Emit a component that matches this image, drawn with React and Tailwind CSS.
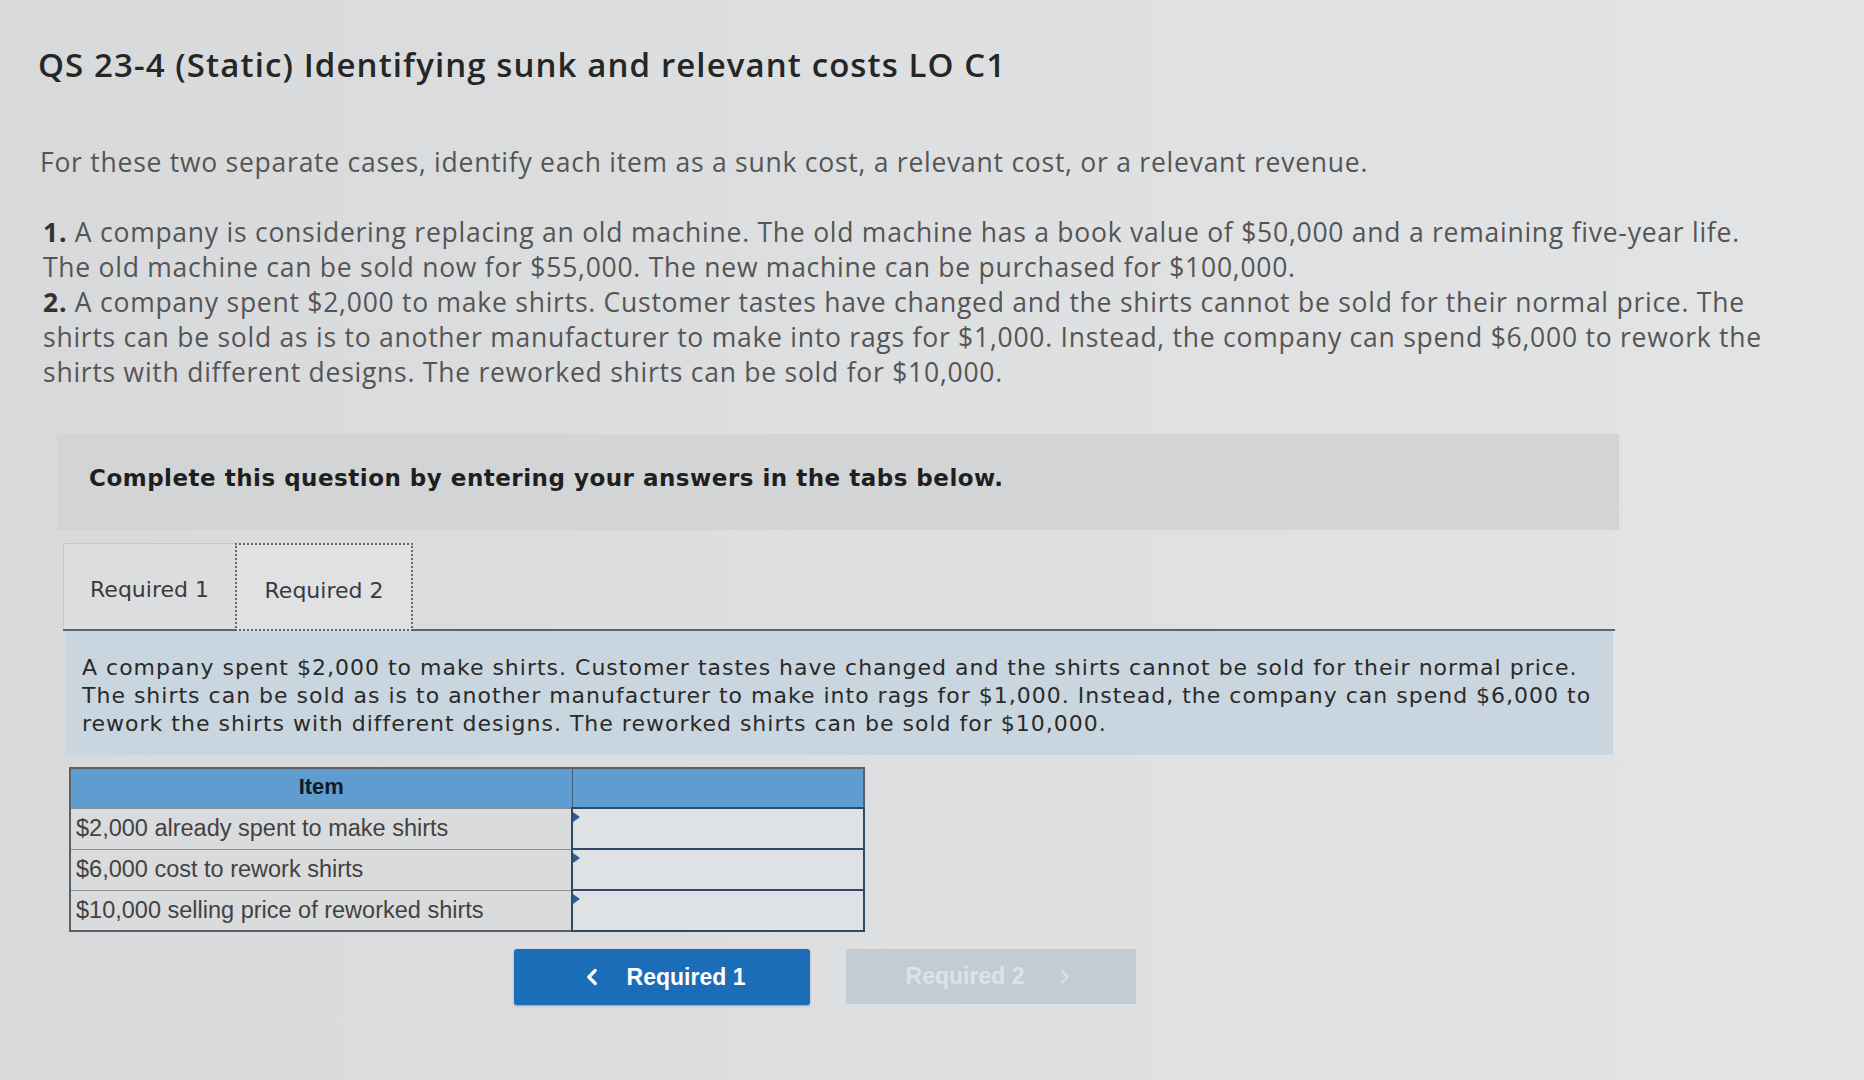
import { ChevronLeft, ChevronRight } from "lucide-react";

const rows = [
  "$2,000 already spent to make shirts",
  "$6,000 cost to rework shirts",
  "$10,000 selling price of reworked shirts",
];

function AnswerCell() {
  return (
    <td className="relative border-2 border-[#2f4a66] bg-[#dfe2e4] p-0">
      <span className="absolute left-0 top-[3px] h-0 w-0 border-y-[5px] border-l-[7px] border-y-transparent border-l-[#2a5d93]" />
      <div className="h-[36px]" />
    </td>
  );
}

export default function App() {
  return (
    <div className="min-h-screen w-full bg-gradient-to-r from-[#d8d9db] via-[#dedfe1] to-[#e3e4e5] pl-[38px] pt-[45px] text-[#2b2b2b]">
      <h1 className="text-[33px] font-semibold leading-[40px] tracking-[1.1px] text-[#262626] [font-family:'Open_Sans',sans-serif]">
        QS 23-4 (Static) Identifying sunk and relevant costs LO C1
      </h1>

      <div className="whitespace-nowrap text-[#555] [font-family:'Open_Sans',sans-serif]">
        <p className="mt-[60px] pl-[2px] text-[26.5px] leading-[35px] tracking-[0.75px]">
          For these two separate cases, identify each item as a sunk cost, a relevant cost, or a relevant revenue.
        </p>
        <div className="mt-[35px] pl-[5px] text-[26.5px] leading-[35px] tracking-[0.75px]">
          <p>
            <b className="font-bold text-[#333]">1.</b> A company is considering replacing an old machine. The old machine has a book value of $50,000 and a remaining five-year life.
            <br />
            The old machine can be sold now for $55,000. The new machine can be purchased for $100,000.
          </p>
          <p>
            <b className="font-bold text-[#333]">2.</b> A company spent $2,000 to make shirts. Customer tastes have changed and the shirts cannot be sold for their normal price. The
            <br />
            shirts can be sold as is to another manufacturer to make into rags for $1,000. Instead, the company can spend $6,000 to rework the
            <br />
            shirts with different designs. The reworked shirts can be sold for $10,000.
          </p>
        </div>
      </div>

      <div className="ml-[19px] mt-[44px] w-[1562px] [font-family:'DejaVu_Sans',sans-serif]">
        <div className="flex h-[96px] items-center bg-[#d3d4d6] pb-[8px] pl-[32px]">
          <span className="text-[23px] font-bold tracking-[0.5px] text-[#1f1f1f]">
            Complete this question by entering your answers in the tabs below.
          </span>
        </div>

        <div className="ml-[6px] mt-[13px] w-[1552px]">
          <div className="flex h-[88px] border-b-2 border-[#5d6670]">
            <div className="flex w-[172px] items-center justify-center border-l border-t border-[#c6c7c9] bg-[#dcdddf] pt-[6px] text-[22px] text-[#3a3a3a]">
              Required 1
            </div>
            <div className="-mb-[2px] flex w-[178px] items-center justify-center border-2 border-dotted border-[#666] bg-[#e0e1e3] pt-[6px] text-[22px] text-[#3a3a3a]">
              Required 2
            </div>
          </div>

          <div className="mx-[2px] whitespace-nowrap bg-[#c9d6df] px-[17px] pb-[17px] pt-[23px] text-[22px] leading-[28px] tracking-[1px] text-[#2a2a2a]">
            A company spent $2,000 to make shirts. Customer tastes have changed and the shirts cannot be sold for their normal price.
            <br />
            The shirts can be sold as is to another manufacturer to make into rags for $1,000. Instead, the company can spend $6,000 to
            <br />
            rework the shirts with different designs. The reworked shirts can be sold for $10,000.
          </div>

          <table className="ml-[6px] mt-[12px] w-[796px] border-collapse border-2 border-[#5a6066] [font-family:'Liberation_Sans',sans-serif]">
            <thead>
              <tr className="h-[40px] bg-[#5f9dd0]">
                <th className="w-[502px] border-r border-[#3d5f80] pb-[4px] text-[22px] font-bold text-[#0f1a26]">Item</th>
                <th className="border-l border-[#3d5f80]" />
              </tr>
            </thead>
            <tbody>
              {rows.map((r) => (
                <tr key={r} className="h-[41px]">
                  <td className="border border-[#8a8e92] bg-[#dadbdd] px-[5px] text-[23.5px] text-[#424242]">{r}</td>
                  <AnswerCell />
                </tr>
              ))}
            </tbody>
          </table>

          <div className="mt-[17px] flex gap-[36px] pl-[451px] [font-family:'Liberation_Sans',sans-serif]">
            <button className="flex h-[56px] w-[296px] items-center justify-center gap-[22px] rounded-[3px] bg-[#1b6db8] text-[23px] font-bold text-white shadow-[0_1px_2px_rgba(0,0,0,0.3)]">
              <ChevronLeft size={26} strokeWidth={3} />
              Required 1
            </button>
            <button className="flex h-[55px] w-[290px] items-center justify-center gap-[30px] bg-[#c4ccd3] text-[23px] font-bold text-[#dde2e6]">
              Required 2
              <ChevronRight size={22} strokeWidth={2} />
            </button>
          </div>
        </div>
      </div>
    </div>
  );
}
